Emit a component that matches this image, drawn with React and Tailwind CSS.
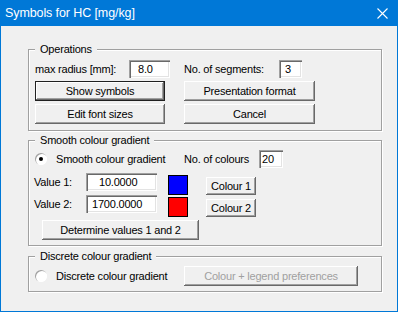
import React from 'react';

const font = { fontFamily: '"Liberation Sans", Arial, sans-serif' };

function Btn({ children, className = '', disabled, isDefault }) {
  return (
    <div
      className={`flex items-center justify-center bg-[#f0f0f0] ${
        isDefault
          ? 'shadow-[inset_-1px_-1px_0_#202020,inset_1px_1px_0_#202020,inset_-2px_-2px_0_#696969,inset_2px_2px_0_#fff,inset_-3px_-3px_0_#a0a0a0]'
          : 'shadow-[inset_-1px_-1px_0_#696969,inset_1px_1px_0_#fff,inset_-2px_-2px_0_#a0a0a0]'
      } ${disabled ? 'text-[#a0a0a0]' : 'text-black'} ${className}`}
    >
      {children}
    </div>
  );
}

function Field({ value, className = '' }) {
  return (
    <div
      className={`flex items-center bg-white h-[18px] shadow-[inset_1px_1px_0_#a0a0a0,inset_2px_2px_0_#696969,inset_-1px_-1px_0_#fff,inset_-2px_-2px_0_#e3e3e3] ${className}`}
    >
      {value}
    </div>
  );
}

function Radio({ checked }) {
  return (
    <div className="w-[12px] h-[12px] rounded-full bg-white flex items-center justify-center shadow-[inset_1px_1px_0_#a0a0a0,inset_-1px_-1px_0_#fff]">
      {checked && <div className="w-[4px] h-[4px] rounded-full bg-black" />}
    </div>
  );
}

function Group({ title, children, className = '' }) {
  return (
    <div className={`relative ml-[27px] w-[354px] border border-[#a0a0a0] shadow-[inset_1px_1px_0_#fff,1px_1px_0_#fff] ${className}`}>
      <span className="absolute left-[6px] top-[-8px] px-[5px] bg-[#f0f0f0] leading-[14px]">{title}</span>
      {children}
    </div>
  );
}

export default function App() {
  return (
    <div className="w-[400px] h-[313px] bg-white" style={font}>
      <div className="w-[398px] h-[312px] border border-t-0 border-[#0078d7] bg-[#f0f0f0] flex flex-col text-[11px] tracking-[-0.2px] text-black">
        <div className="h-[26px] bg-[#0078d7] -mx-px flex items-center justify-between pl-[5px] pr-[10px]">
          <span className="text-white text-[12.5px] tracking-[-0.1px]">Symbols for HC [mg/kg]</span>
          <svg width="11" height="11" viewBox="0 0 11 11" className="mt-[1px]">
            <path d="M0.5 0.5 L10.5 10.5 M10.5 0.5 L0.5 10.5" stroke="#fff" strokeWidth="1.1" fill="none" />
          </svg>
        </div>

        <Group title="Operations" className="mt-[23px] pt-[10px] pl-[6px] pb-[6px]">
          <div className="flex items-center h-[18px]">
            <span className="w-[94px]">max radius [mm]:</span>
            <Field value="8.0" className="w-[41px] pl-[9px]" />
            <span className="ml-[14px] w-[95px]">No. of segments:</span>
            <Field value="3" className="w-[23px] pl-[6px]" />
          </div>
          <div className="flex mt-[3px] gap-[19px]">
            <Btn isDefault className="w-[130px] h-[20px]">Show symbols</Btn>
            <Btn className="w-[131px] h-[20px]">Presentation format</Btn>
          </div>
          <div className="flex mt-[3px] gap-[19px]">
            <Btn className="w-[130px] h-[20px]">Edit font sizes</Btn>
            <Btn className="w-[131px] h-[20px]">Cancel</Btn>
          </div>
        </Group>

        <Group title="Smooth colour gradient" className="mt-[9px] pt-[9px] pl-[6px] pb-[5px]">
          <div className="flex items-center h-[18px]">
            <Radio checked />
            <span className="ml-[9px] w-[128px]">Smooth colour gradient</span>
            <span className="w-[75px]">No. of colours</span>
            <Field value="20" className="w-[24px] pl-[3px]" />
          </div>
          <div className="flex mt-[5px]">
            <div className="flex flex-col gap-[4px]">
              <div className="flex items-center">
                <span className="w-[52px] -ml-px">Value 1:</span>
                <Field value="10.0000" className="w-[71px] pl-[13px]" />
              </div>
              <div className="flex items-center">
                <span className="w-[52px] -ml-px">Value 2:</span>
                <Field value="1700.0000" className="w-[71px] pl-[6px]" />
              </div>
            </div>
            <div className="flex flex-col gap-[2px] mt-[2px] ml-[11px]">
              <div className="w-[20px] h-[20px] bg-[#0000ff] border border-black" />
              <div className="w-[20px] h-[20px] bg-[#ff0000] border border-black" />
            </div>
            <div className="flex flex-col gap-[4px] mt-[4px] ml-[18px]">
              <Btn className="w-[50px] h-[18px]">Colour 1</Btn>
              <Btn className="w-[50px] h-[18px]">Colour 2</Btn>
            </div>
          </div>
          <Btn className="mt-[3px] ml-[7px] w-[157px] h-[20px]">Determine values 1 and 2</Btn>
        </Group>

        <Group title="Discrete colour gradient" className="mt-[10px] pt-[9px] pl-[6px] pb-[5px]">
          <div className="flex items-center h-[20px]">
            <Radio />
            <span className="ml-[9px] w-[128px]">Discrete colour gradient</span>
            <Btn disabled className="w-[174px] h-[20px]">Colour + legend preferences</Btn>
          </div>
        </Group>
      </div>
    </div>
  );
}
